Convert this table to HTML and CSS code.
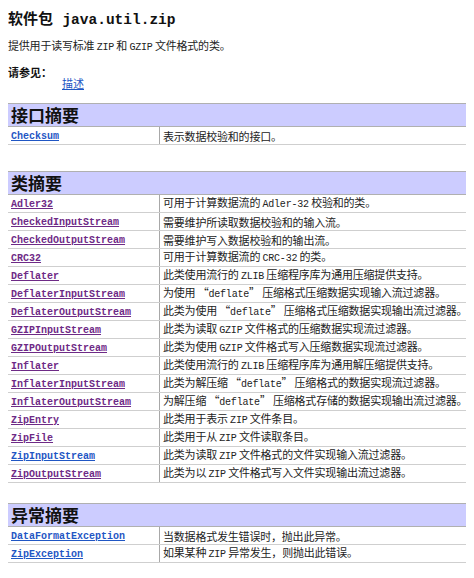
FILE: index.html
```html
<!DOCTYPE html>
<html lang="zh-CN">
<head>
<meta charset="utf-8">
<title>java.util.zip</title>
<link rel="stylesheet" href="styles.css">
</head>
<body>
<h2 class="title">软件包 <span class="tmono">java.util.zip</span></h2>
<p class="intro">提供用于读写标准 <span class="m">ZIP</span> 和 <span class="m">GZIP</span> 文件格式的类。</p>
<div class="see">
  <div class="see-label">请参见：</div>
  <a class="see-link" href="#">描述</a>
</div>

<table class="sum sum-iface">
  <tr class="head"><th colspan="2">接口摘要</th></tr>
  <tr><td class="name"><a class="lk" href="#">Checksum</a></td><td class="desc">表示数据校验和的接口。</td></tr>
</table>

<table class="sum sum-class">
  <tr class="head"><th colspan="2">类摘要</th></tr>
  <tr><td class="name"><a class="lk v" href="#">Adler32</a></td><td class="desc">可用于计算数据流的 <span class="m">Adler-32</span> 校验和的类。</td></tr>
  <tr><td class="name"><a class="lk v" href="#">CheckedInputStream</a></td><td class="desc">需要维护所读取数据校验和的输入流。</td></tr>
  <tr><td class="name"><a class="lk v" href="#">CheckedOutputStream</a></td><td class="desc">需要维护写入数据校验和的输出流。</td></tr>
  <tr><td class="name"><a class="lk v" href="#">CRC32</a></td><td class="desc">可用于计算数据流的 <span class="m">CRC-32</span> 的类。</td></tr>
  <tr><td class="name"><a class="lk v" href="#">Deflater</a></td><td class="desc">此类使用流行的 <span class="m">ZLIB</span> 压缩程序库为通用压缩提供支持。</td></tr>
  <tr><td class="name"><a class="lk v" href="#">DeflaterInputStream</a></td><td class="desc">为使用 “<span class="m">deflate</span>” 压缩格式压缩数据实现输入流过滤器。</td></tr>
  <tr><td class="name"><a class="lk v" href="#">DeflaterOutputStream</a></td><td class="desc">此类为使用 “<span class="m">deflate</span>” 压缩格式压缩数据实现输出流过滤器。</td></tr>
  <tr><td class="name"><a class="lk v" href="#">GZIPInputStream</a></td><td class="desc">此类为读取 <span class="m">GZIP</span> 文件格式的压缩数据实现流过滤器。</td></tr>
  <tr><td class="name"><a class="lk v" href="#">GZIPOutputStream</a></td><td class="desc">此类为使用 <span class="m">GZIP</span> 文件格式写入压缩数据实现流过滤器。</td></tr>
  <tr><td class="name"><a class="lk v" href="#">Inflater</a></td><td class="desc">此类使用流行的 <span class="m">ZLIB</span> 压缩程序库为通用解压缩提供支持。</td></tr>
  <tr><td class="name"><a class="lk v" href="#">InflaterInputStream</a></td><td class="desc">此类为解压缩 “<span class="m">deflate</span>” 压缩格式的数据实现流过滤器。</td></tr>
  <tr><td class="name"><a class="lk v" href="#">InflaterOutputStream</a></td><td class="desc">为解压缩 “<span class="m">deflate</span>” 压缩格式存储的数据实现输出流过滤器。</td></tr>
  <tr><td class="name"><a class="lk v" href="#">ZipEntry</a></td><td class="desc">此类用于表示 <span class="m">ZIP</span> 文件条目。</td></tr>
  <tr><td class="name"><a class="lk v" href="#">ZipFile</a></td><td class="desc">此类用于从 <span class="m">ZIP</span> 文件读取条目。</td></tr>
  <tr><td class="name"><a class="lk" href="#">ZipInputStream</a></td><td class="desc">此类为读取 <span class="m">ZIP</span> 文件格式的文件实现输入流过滤器。</td></tr>
  <tr><td class="name"><a class="lk v" href="#">ZipOutputStream</a></td><td class="desc">此类为以 <span class="m">ZIP</span> 文件格式写入文件实现输出流过滤器。</td></tr>
</table>

<table class="sum sum-exc">
  <tr class="head"><th colspan="2">异常摘要</th></tr>
  <tr><td class="name"><a class="lk" href="#">DataFormatException</a></td><td class="desc">当数据格式发生错误时，抛出此异常。</td></tr>
  <tr><td class="name"><a class="lk" href="#">ZipException</a></td><td class="desc">如果某种 <span class="m">ZIP</span> 异常发生，则抛出此错误。</td></tr>
</table>
</body>
</html>
```

FILE: styles.css
```css
html {
  overflow: hidden;
  background: #ffffff;
}

body {
  margin: 8px;
  font-family: "Noto Sans CJK SC", "Liberation Sans", sans-serif;
  font-size: 11px;
  color: #222222;
}

.title {
  margin: 0;
  font-size: 15px;
  line-height: 20px;
  font-weight: bold;
  color: #111111;
}

.tmono {
  font-family: "Liberation Mono", monospace;
  font-size: 14.5px;
  font-weight: bold;
  margin-left: 6px;
}

.m {
  font-family: "Liberation Mono", monospace;
  font-size: 10px;
}

.intro {
  margin: 7px 0 0 0;
  line-height: 16px;
  letter-spacing: -0.2px;
}

.see {
  margin-top: 11px;
}

.see-label {
  font-weight: bold;
  line-height: 10px;
  color: #111111;
}

.see-link {
  display: block;
  margin-left: 54px;
  line-height: 12px;
  color: #1f56c4;
  text-decoration: underline;
}

.sum {
  width: 490px;
  border-collapse: collapse;
  border: 1px solid #b4b4b4;
  margin-left: -1px;
}

.sum-iface {
  margin-top: 14px;
}

.sum-class {
  margin-top: 26px;
}

.sum-exc {
  margin-top: 20px;
}

.head th {
  background: #ccccff;
  text-align: left;
  font-size: 17px;
  font-weight: bold;
  color: #111111;
  height: 22px;
  padding: 0 3px;
  line-height: 20px;
  border: 1px solid #b0b0b0;
}

.sum td {
  height: 16.5px;
  padding: 0 3px;
  line-height: 14px;
  border: 1px solid #cfcfcf;
  white-space: nowrap;
}

.sum td.desc {
  letter-spacing: -0.2px;
}

.sum td.name {
  width: 145px;
  border-right-color: #a8a8a8;
}

.sum-exc td {
  height: 17px;
}

.lk {
  font-family: "Liberation Mono", monospace;
  font-size: 10px;
  font-weight: bold;
  color: #1f56c4;
  text-decoration: underline;
}

.lk.v {
  color: #6e2a86;
}
```
